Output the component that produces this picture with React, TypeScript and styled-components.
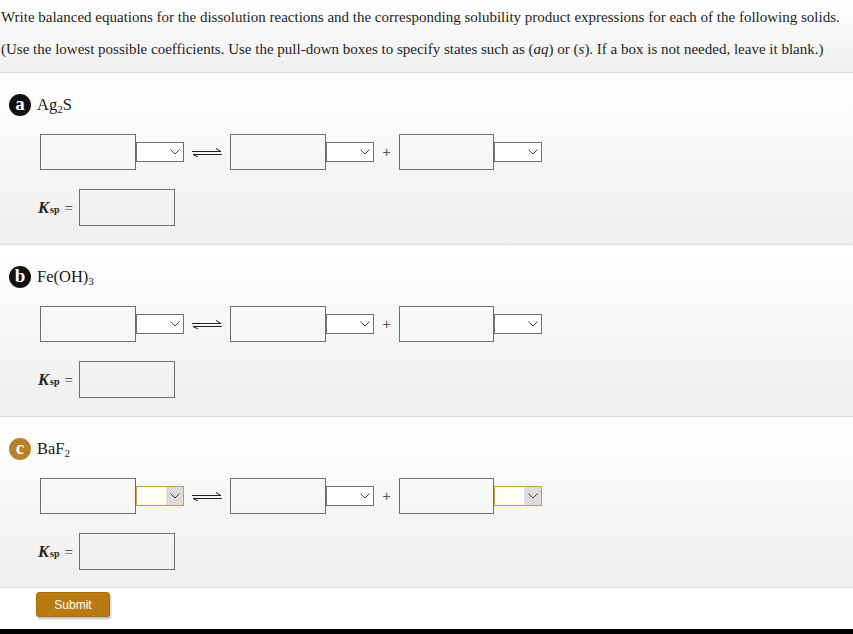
import React from 'react';
import styled, { createGlobalStyle, css } from 'styled-components';

const GlobalStyle = createGlobalStyle`
  html, body {
    margin: 0;
    padding: 0;
    background: #ffffff;
  }
  body {
    font-family: 'Liberation Serif', 'Times New Roman', serif;
    color: #222;
  }
`;

const Page = styled.div`
  width: 853px;
  height: 634px;
  display: flex;
  flex-direction: column;
  overflow: hidden;
`;

const Header = styled.div`
  padding: 8px 0 14px 1px;
  background: linear-gradient(#ffffff, #efefef);
  border-bottom: 1px solid #dcdcdc;
  display: flex;
  flex-direction: column;
  gap: 14px;
`;

const Instruction = styled.p`
  margin: 0;
  font-size: 15px;
  line-height: 18px;
  white-space: nowrap;
  color: #1f1f1f;
`;

const Section = styled.section<{ $last?: boolean }>`
  padding: 21px 0 ${(p) => (p.$last ? 17 : 18)}px;
  background: linear-gradient(#ffffff, #efefef);
  border-bottom: 1px solid #dcdcdc;
  display: flex;
  flex-direction: column;
`;

const TitleRow = styled.div`
  display: flex;
  align-items: center;
  gap: 6px;
  padding-left: 9px;
  height: 22px;
`;

const Badge = styled.span<{ $gold?: boolean }>`
  width: 22px;
  height: 22px;
  border-radius: 50%;
  background: ${(p) => (p.$gold ? '#b5812a' : '#111111')};
  color: #ffffff;
  font-weight: bold;
  font-size: 19px;
  line-height: 20px;
  display: flex;
  align-items: center;
  justify-content: center;
  padding-bottom: 2px;
  box-sizing: border-box;
`;

const Compound = styled.span`
  font-size: 16.5px;
  color: #1a1a1a;
  sub {
    font-size: 11px;
    vertical-align: -3px;
    line-height: 0;
  }
`;

const EquationRow = styled.div`
  display: flex;
  align-items: center;
  margin: 18px 0 0 40px;
`;

const Box = styled.div<{ $w?: number; $h?: number }>`
  width: ${(p) => p.$w ?? 95}px;
  height: ${(p) => p.$h ?? 36}px;
  box-sizing: border-box;
  border: 1px solid #6f6f6f;
  background: transparent;
`;

const Select = styled.div<{ $active?: boolean }>`
  width: 48px;
  height: 20px;
  box-sizing: border-box;
  border: 1px solid #6f6f6f;
  background: #ffffff;
  display: flex;
  justify-content: flex-end;
  ${(p) =>
    p.$active &&
    css`
      border-color: #c99f3c;
      background: #fffff6;
    `}
`;

const Chevron = styled.span<{ $active?: boolean }>`
  width: 17px;
  display: flex;
  align-items: center;
  justify-content: center;
  background: ${(p) => (p.$active ? '#dcdcdc' : 'transparent')};
`;

const Arrow = styled.svg`
  margin: 0 8px;
  display: block;
`;

const Plus = styled.span`
  width: 25px;
  text-align: center;
  font-family: 'Liberation Sans', Arial, sans-serif;
  font-size: 14px;
  color: #555;
`;

const KspRow = styled.div`
  display: flex;
  align-items: center;
  margin: 19px 0 0 38px;
`;

const KspLabel = styled.span`
  font-size: 15px;
  display: flex;
  align-items: baseline;
  width: 41px;
  i {
    font-weight: bold;
    font-size: 16.5px;
  }
  sub {
    font-weight: bold;
    font-size: 10px;
    vertical-align: -2px;
    line-height: 0;
    margin-left: 1px;
  }
  .eq {
    margin-left: 5px;
    font-size: 15px;
    color: #333;
  }
`;

const Footer = styled.div`
  padding: 4px 0 0 36px;
  flex: 1;
  display: flex;
  flex-direction: column;
  justify-content: space-between;
`;

const SubmitButton = styled.button`
  width: 74px;
  height: 25px;
  border: 1px solid #a96d0e;
  border-radius: 3px;
  background: #b97a12;
  color: #ffffff;
  font-family: 'Liberation Sans', Arial, sans-serif;
  font-size: 12px;
  box-shadow: 1px 2px 2px rgba(0, 0, 0, 0.25);
  padding: 0;
  cursor: pointer;
`;

const BottomBar = styled.div`
  height: 5px;
  margin-left: -36px;
  background: #000000;
`;

const StateSelect = ({ active }: { active?: boolean }) => (
  <Select $active={active}>
    <Chevron $active={active}>
      <svg width="10" height="6" viewBox="0 0 10 6">
        <path d="M0.5 0.5 L5 5 L9.5 0.5" fill="none" stroke="#444" strokeWidth="1" />
      </svg>
    </Chevron>
  </Select>
);

const Equilibrium = () => (
  <Arrow width="30" height="9" viewBox="0 0 30 9">
    <path d="M0 3.5 H29 L24 0.5" fill="none" stroke="#222" strokeWidth="1" />
    <path d="M30 6.5 H1 L6 8.9" fill="none" stroke="#222" strokeWidth="1" />
  </Arrow>
);

type Part = { letter: string; gold?: boolean; name: React.ReactNode; active?: boolean };

const parts: Part[] = [
  { letter: 'a', name: <>Ag<sub>2</sub>S</> },
  { letter: 'b', name: <>Fe(OH)<sub>3</sub></> },
  { letter: 'c', gold: true, active: true, name: <>BaF<sub>2</sub></> },
];

const Problem = ({ part, last }: { part: Part; last?: boolean }) => (
  <Section $last={last}>
    <TitleRow>
      <Badge $gold={part.gold}>{part.letter}</Badge>
      <Compound>{part.name}</Compound>
    </TitleRow>
    <EquationRow>
      <Box $w={96} />
      <StateSelect active={part.active} />
      <Equilibrium />
      <Box $w={96} />
      <StateSelect />
      <Plus>+</Plus>
      <Box />
      <StateSelect active={part.active} />
    </EquationRow>
    <KspRow>
      <KspLabel>
        <i>K</i>
        <sub>sp</sub>
        <span className="eq">=</span>
      </KspLabel>
      <Box $w={96} $h={37} />
    </KspRow>
  </Section>
);

export default function App() {
  return (
    <Page>
      <GlobalStyle />
      <Header>
        <Instruction>
          Write balanced equations for the dissolution reactions and the corresponding solubility product
          expressions for each of the following solids.
        </Instruction>
        <Instruction>
          (Use the lowest possible coefficients. Use the pull-down boxes to specify states such as (<i>aq</i>) or (
          <i>s</i>). If a box is not needed, leave it blank.)
        </Instruction>
      </Header>
      {parts.map((p, i) => (
        <Problem key={p.letter} part={p} last={i === parts.length - 1} />
      ))}
      <Footer>
        <SubmitButton>Submit</SubmitButton>
        <BottomBar />
      </Footer>
    </Page>
  );
}
